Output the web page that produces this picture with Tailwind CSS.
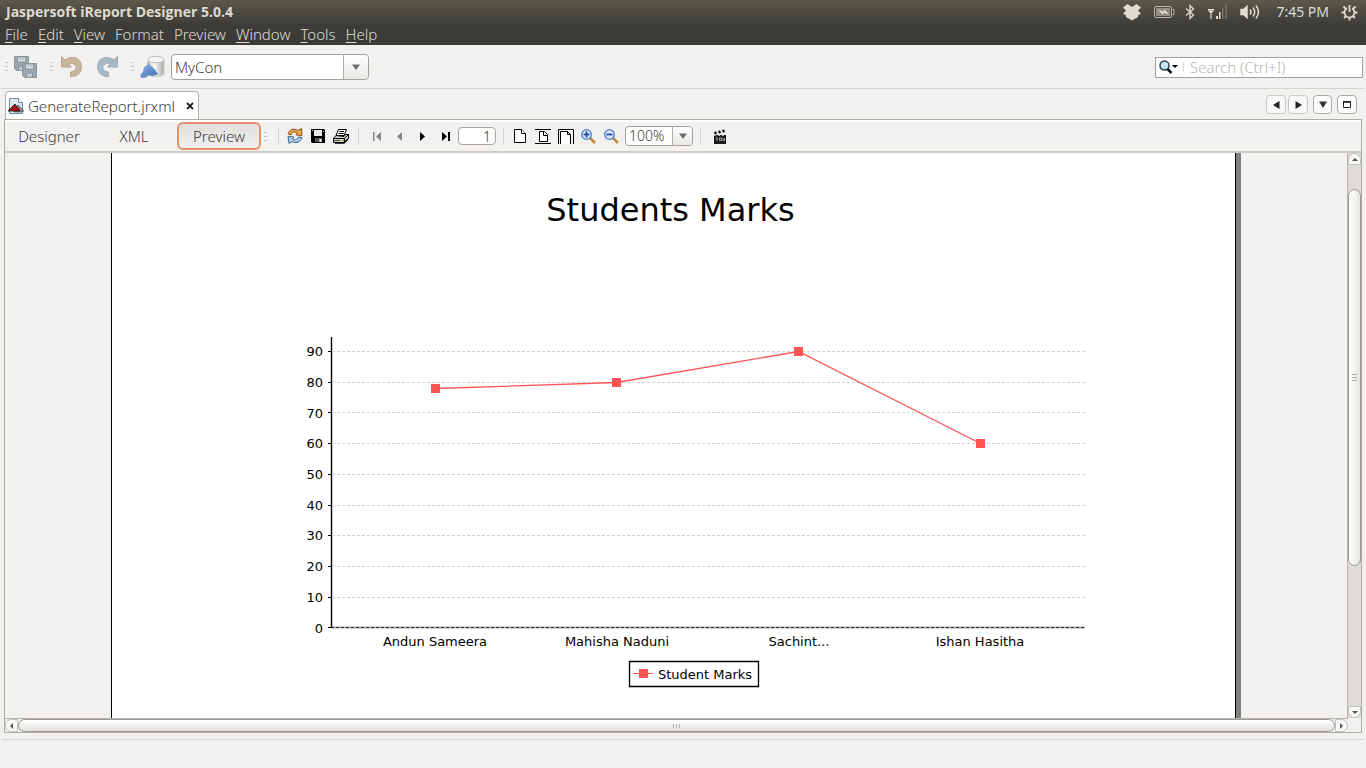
<!DOCTYPE html>
<html lang="en">
<head>
<meta charset="utf-8">
<title>Jaspersoft iReport Designer 5.0.4</title>
<script src="https://cdn.jsdelivr.net/npm/@tailwindcss/browser@4"></script>
</head>
<body class="flex h-screen flex-col overflow-hidden bg-[#f2f1f0] font-['Noto_Sans','Open_Sans',sans-serif] text-[15px] font-light text-[#3c3c3c]">

<!-- System panel -->
<header class="flex h-6 shrink-0 items-center justify-between bg-linear-to-b from-[#5b584b] to-[#3e3d38] pl-1.5 pr-2 text-[#dfdbd2]">
  <h1 class="font-['Open_Sans',sans-serif] text-[14px] font-bold leading-6">Jaspersoft iReport Designer 5.0.4</h1>
  <div class="flex items-center">
    <svg class="mr-3" width="20" height="18" viewBox="0 0 20 18" fill="#dfdbd2"><path d="M5.500 1 10 4l4.500-3L19 4.500 16 7.500l3 3-3 2v1.500l-6 3.500-6-3.500v-1.500l-3-2 3-3-3-3z"/></svg>
    <svg class="mr-2.5" width="21" height="12" viewBox="0 0 21 12"><rect x=".5" y=".5" width="17" height="11" rx="1.500" fill="none" stroke="#b9b5ab"/><rect x="2" y="2" width="14" height="8" fill="#8f8c82"/><path d="M18.500 3.500h1.500v5h-1.500" fill="none" stroke="#b9b5ab"/><path d="m3.500 3.500 6 2.500.5-2.500 5 5-5.500-2-.5 2z" fill="#f0ede6"/></svg>
    <svg class="mr-3" width="10" height="16" viewBox="0 0 10 16" fill="none" stroke="#dfdbd2" stroke-width="1.300"><path d="m1 4.500 7.500 6.500L5 14.500v-13L8.500 5 1 11.500"/></svg>
    <svg class="mr-3" width="21" height="16" viewBox="0 0 21 16"><path d="M1 5.500h6M1.500 6 4 9l2.500-3M4 5.500V15" fill="none" stroke="#dfdbd2" stroke-width="1.200"/><path d="M9 12h2v3H9z" fill="#dfdbd2"/><path d="M12 8h1.500v7H12z" fill="#dfdbd2"/><path d="M15 4h1.500v11H15zM18.500 0H20v15h-1.500z" fill="#77746a"/></svg>
    <svg class="mr-3.5" width="22" height="16" viewBox="0 0 22 16" fill="none" stroke="#dfdbd2" stroke-width="1.500"><path d="M1 5.500h2.500L7 2.500v11L3.500 10.500H1z" fill="#dfdbd2"/><path d="M10 5.500q2 2.500 0 5M13 3.500q3.500 4.500 0 9M16 1.500q5 6.500 0 13"/></svg>
    <span class="mr-3 font-['Noto_Sans',sans-serif] text-[14px] font-normal leading-6">7:45 PM</span>
    <svg width="17" height="17" viewBox="0 0 17 17" fill="none" stroke="#dfdbd2"><path d="M6 4.200a5 5 0 1 0 5 0" stroke-width="1.800"/><path d="M8.500 1v7" stroke-width="1.800"/><path d="M.5 8.500h3M13.500 8.500h3M8.500 13.500v3M2.500 2.500l2.500 2.500M14.500 2.500l-2.500 2.500M3 14l2-2M14 14l-2-2" stroke-width="1.800"/></svg>
  </div>
</header>

<!-- Application menu -->
<nav class="flex h-[21px] shrink-0 items-center gap-2.5 bg-[#3c3b37] pb-0.5 pl-[5px] leading-5 text-[#dfdbd2]">
  <button><u class="underline-offset-2">F</u>ile</button>
  <button><u class="underline-offset-2">E</u>dit</button>
  <button><u class="underline-offset-2">V</u>iew</button>
  <button>Format</button>
  <button>Preview</button>
  <button><u class="underline-offset-2">W</u>indow</button>
  <button><u class="underline-offset-2">T</u>ools</button>
  <button><u class="underline-offset-2">H</u>elp</button>
</nav>

<!-- Main toolbar -->
<div class="mx-px flex h-11 shrink-0 items-center justify-between border-b border-[#d5d3d0] pl-1 pr-0.5">
  <div class="flex items-center">
    <svg class="mr-1.5" width="3" height="9" viewBox="0 0 3 9" stroke="#c6c3c0"><path d="M0 .5h3M0 4.500h3M0 8.500h3"/></svg>
    <button aria-label="Save all" class="mr-[13px]"><svg width="23" height="22" viewBox="0 0 23 22"><g stroke="#8a969e" fill="#9aa7af"><path d="M.5.500h14v14h-12l-2-2z"/><path d="M3.500 1h8v5h-8z" fill="#dbe0e2"/><path d="M4.500 10h6v4.500h-6z" fill="#c3cacd"/><path d="M8.500 7.500h14v14h-12l-2-2z"/><path d="M11.500 8h8v5h-8z" fill="#dbe0e2"/><path d="M12.500 17h6v4.500h-6z" fill="#c3cacd"/></g><path d="M5 3h5M13 10h5" stroke="#aab3b8"/></svg></button>
    <svg class="mr-2" width="3" height="9" viewBox="0 0 3 9" stroke="#c6c3c0"><path d="M0 .5h3M0 4.500h3M0 8.500h3"/></svg>
    <button aria-label="Undo" class="mr-[13px]"><svg width="22" height="22" viewBox="0 0 22 22"><path d="M.5.500 4 4C10-.5 20 .5 20.500 10.500 20.500 17 16 21 9.500 20.500v-4.500c8-.5 7.500-10-2-8.500l3 3.500H.5z" fill="#c9b49c" stroke="#bba58d"/></svg></button>
    <button aria-label="Redo" class="mr-[13px]"><svg width="22" height="22" viewBox="0 0 22 22"><path d="M21.500.5 18 4C12-.5 2 .5 1.500 10.500 1.500 17 6 21 12.500 20.500v-4.500c-8-.5-7.500-10 2-8.500l-3 3.500h10z" fill="#a9bac4" stroke="#9aacb7"/></svg></button>
    <svg class="mr-1.5" width="3" height="9" viewBox="0 0 3 9" stroke="#c6c3c0"><path d="M0 .5h3M0 4.500h3M0 8.500h3"/></svg>
    <button aria-label="Database connections" class="mr-1.5"><svg width="25" height="24" viewBox="0 0 25 24"><defs><linearGradient id="can"><stop stop-color="#c9c9c9"/><stop offset=".4" stop-color="#fafafa"/><stop offset="1" stop-color="#a9a9a9"/></linearGradient><linearGradient id="plug" x1="0" y1="0" x2="1" y2="1"><stop stop-color="#8fb2e6"/><stop offset="1" stop-color="#3f6cb4"/></linearGradient></defs><path d="M8 4.500v14c1 4 15 4 16 0v-14z" fill="url(#can)" stroke="#c5c5c5"/><ellipse cx="16" cy="4.500" rx="8" ry="3.200" fill="#f6f6f6" stroke="#c0c0c0"/><path d="m8.500 8 1.500 3c4 2 5 4 6 6l2 2-3 1c-3 1.500-4 0-6 0l-4 2.500H1v-3l2.500-3c0-3 1-5 4-6z" fill="url(#plug)" stroke="#6f93cc" stroke-width=".7"/></svg></button>
    <div class="relative">
      <select aria-label="Connection" class="block h-[26px] w-[198px] appearance-none rounded border border-[#a3a09c] bg-white pl-[3px] leading-5"><option>MyCon</option></select>
      <span class="pointer-events-none absolute inset-y-px right-px flex w-[25px] items-center justify-center rounded-r border-l border-[#b0ada9] bg-linear-to-b from-white to-[#e9e8e6]"><svg width="8" height="6" viewBox="0 0 8 6"><path d="M0 .5h8l-4 5.500z" fill="#6d6d6d"/></svg></span>
    </div>
  </div>
  <label class="mt-px flex h-[21px] w-52 items-center border border-[#a3a09c] bg-white pl-[3px]">
    <svg class="shrink-0" width="25" height="14" viewBox="0 0 25 14"><circle cx="5.500" cy="5.500" r="4.500" fill="#c8e4f8" stroke="#284254" stroke-width="1.500"/><path d="m8.500 9 4 4" stroke="#111" stroke-width="2.500"/><path d="M13 5h6l-3 3z" fill="#000"/><path d="M24.500 2.500v9" stroke="#d5d5d5"/></svg>
    <input aria-label="Search" placeholder="Search (Ctrl+I)" class="h-full w-full min-w-0 bg-transparent pl-1.5 outline-none placeholder:text-[#b5b5b5]">
  </label>
</div>

<!-- Document tabs -->
<div class="flex h-[30px] shrink-0 items-end justify-between pl-[5px] pr-[9px]">
  <div class="-mb-px flex h-[29px] w-[194px] items-center rounded-t border border-b-0 border-[#b5b2ad] bg-white pb-px pl-0.5">
    <svg width="16" height="16" viewBox="0 0 16 16"><path d="M1.500.5h9l4 4v11h-13z" fill="#dbe6f2" stroke="#7088a4"/><path d="M10.500.5v4h4" fill="#fff" stroke="#7088a4"/><path d="m10 7 6 6-3 1H6z" fill="#8a8a8a" stroke="#333" stroke-width=".5"/><path d="m0 13 7-7 5 7z" fill="#a80f0f" stroke="#111" stroke-width=".8"/></svg>
    <span class="ml-1 leading-5">GenerateReport.jrxml</span>
    <button aria-label="Close tab" class="ml-auto mr-1"><svg width="8" height="8" viewBox="0 0 8 8"><path d="m1 1 6 6M7 1 1 7" stroke="#222" stroke-width="1.800"/></svg></button>
  </div>
  <div class="mb-[5px] flex">
    <button aria-label="Previous document" class="mr-0.5 flex h-[19px] w-5 items-center justify-center rounded border border-[#cbc8c4] bg-[#f8f8f7]"><svg width="7" height="8" viewBox="0 0 7 8"><path d="M6.500 0v8L0 4z" fill="#222"/></svg></button>
    <button aria-label="Next document" class="mr-[5px] flex h-[19px] w-5 items-center justify-center rounded border border-[#cbc8c4] bg-[#f8f8f7]"><svg width="7" height="8" viewBox="0 0 7 8"><path d="M.5 0v8L7 4z" fill="#222"/></svg></button>
    <button aria-label="List documents" class="mr-[5px] flex h-[19px] w-[19px] items-center justify-center rounded border border-[#aeaba7] bg-[#fcfcfc]"><svg width="8" height="7" viewBox="0 0 8 7"><path d="M0 .5h8L4 7z" fill="#333"/></svg></button>
    <button aria-label="Maximize" class="flex h-[19px] w-5 items-center justify-center rounded border border-[#aeaba7] bg-[#fcfcfc]"><svg width="8" height="7" viewBox="0 0 8 7"><path d="M.5 1h7v5.500h-7z" fill="#fff" stroke="#222"/><path d="M0 .8h8" stroke="#222" stroke-width="1.500"/></svg></button>
  </div>
</div>

<!-- Editor -->
<main class="ml-1 mr-1 flex min-h-0 flex-1 flex-col border border-[#aeaba4]">
  <div class="flex h-[33px] shrink-0 items-center border-b-2 border-[#cfccc8] border-t-2 border-t-white pb-px pl-0.5">
    <button class="mr-px h-7 w-[84px]">Designer</button>
    <button class="mr-px h-7 w-[84px]">XML</button>
    <button class="flex h-7 w-[84px] items-center justify-center rounded-md border-2 border-[#e5916d] bg-linear-to-b from-[#e0dfde] to-[#f1f0ef] leading-5">Preview</button>
    <svg class="ml-[3px]" width="3" height="9" viewBox="0 0 3 9" stroke="#c6c3c0"><path d="M0 .5h3M0 4.500h3M0 8.500h3"/></svg>
    <span class="ml-[11px] mr-1 h-[17px] w-px bg-[#d3d0cd]"></span>
    <button aria-label="Reload" class="flex w-[23px] justify-center"><svg width="16" height="16" viewBox="0 0 16 16"><path d="M1 6C2 2 6-.5 11 2.500L14.500.5 15 7.500l-6-.5 1.500-2C7 3 5 4 4 7z" fill="#eda644" stroke="#7a4a10" stroke-width=".9"/><path d="M15 9.500c-1 4.500-5.500 6.500-10 4l-3 2-1-7 6 .5-1.500 2c3 1.500 5 .5 6-2z" fill="#a5cdec" stroke="#2f5878" stroke-width=".9"/></svg></button>
    <button aria-label="Save" class="flex w-[23px] justify-center"><svg width="14" height="14" viewBox="0 0 14 14"><path d="M0 0h13l1 1v13H1l-1-1z" fill="#000"/><path d="M3 1h8v6H3z" fill="#e8e8e8"/><path d="M1 1h1v1H1zM12 2h1v1h-1z" fill="#ddd"/><path d="M4 9h7v4H4z" fill="#555"/><path d="M8.500 10h2v3h-2z" fill="#fff"/></svg></button>
    <button aria-label="Print" class="flex w-[23px] justify-center"><svg width="16" height="15" viewBox="0 0 16 15"><path d="M5.500.5h8l-2.500 6H3z" fill="#fff" stroke="#000"/><path d="M6.500 2.500H11M5.500 4.500h5" stroke="#000"/><path d="m3 6.500-2.500 3v4h11l4-4v-4h-3l-1.500 2z" fill="#d0d0d0" stroke="#000"/><path d="M.5 9.500h11l4-4M11.500 9.500v4" stroke="#000" fill="none"/><path d="M1 11.500h10" stroke="#555"/><path d="M7 11h3v1H7z" fill="#e8df20"/><path d="M2 14h9l4-4" stroke="#000" fill="none" stroke-width="1.500"/></svg></button>
    <span class="mx-1.5 h-[17px] w-px bg-[#d3d0cd]"></span>
    <button aria-label="First page" class="flex w-[23px] justify-center"><svg width="8" height="9" viewBox="0 0 8 9" fill="#858585"><path d="M0 0h1.500v9H0zM8 0v9L3 4.500z"/></svg></button>
    <button aria-label="Previous page" class="flex w-[23px] justify-center"><svg width="5" height="9" viewBox="0 0 5 9" fill="#858585"><path d="M5 0v9L0 4.500z"/></svg></button>
    <button aria-label="Next page" class="flex w-[23px] justify-center"><svg width="5" height="9" viewBox="0 0 5 9"><path d="M0 0v9l5-4.500z"/></svg></button>
    <button aria-label="Last page" class="flex w-[23px] justify-center"><svg width="8" height="9" viewBox="0 0 8 9"><path d="M0 0v9l5-4.500zM6 0h2v9H6z"/></svg></button>
    <input aria-label="Page number" value="1" class="ml-px h-[18px] w-[38px] rounded border border-[#aaa7a3] bg-white pr-1 text-right text-[14px] leading-4">
    <span class="ml-[7px] mr-1 h-[17px] w-px bg-[#d3d0cd]"></span>
    <button aria-label="Actual size" class="flex w-[23px] justify-center"><svg width="12" height="14" viewBox="0 0 12 14" fill="#fff" stroke="#000"><path d="M.5.5h7l4 4v9H.5z"/><path d="M7.500.5v4h4"/></svg></button>
    <button aria-label="Fit page" class="flex w-[23px] justify-center"><svg width="16" height="15" viewBox="0 0 16 15" fill="#fff" stroke="#000"><path d="M0 .5h16M0 14.500h16"/><path d="M4.500 2.500h5l3 3v7h-8z"/><path d="M8.500 2.500v4h4"/></svg></button>
    <button aria-label="Fit width" class="flex w-[23px] justify-center"><svg width="16" height="15" viewBox="0 0 16 15" fill="none" stroke="#000"><path d="M.5 15V.5h15V15"/><path d="M2.500 15V2.500h7l3 3V15" fill="#fff"/><path d="M9.500 2.500v3h3"/></svg></button>
    <button aria-label="Zoom in" class="flex w-[23px] justify-center"><svg width="15" height="15" viewBox="0 0 15 15"><path d="m9 9 5 5" stroke="#c58a38" stroke-width="2.500"/><circle cx="5.500" cy="5.500" r="4.800" fill="#d5e8fc" stroke="#4e7dcb" stroke-width="1.300"/><path d="M2.500 5.500h6M5.500 2.500v6" stroke="#173f94" stroke-width="1.700"/></svg></button>
    <button aria-label="Zoom out" class="flex w-[23px] justify-center"><svg width="15" height="15" viewBox="0 0 15 15"><path d="m9 9 5 5" stroke="#c58a38" stroke-width="2.500"/><circle cx="5.500" cy="5.500" r="4.800" fill="#d5e8fc" stroke="#4e7dcb" stroke-width="1.300"/><path d="M2.500 5.500h6" stroke="#173f94" stroke-width="1.700"/></svg></button>
    <div class="relative ml-0.5">
      <select aria-label="Zoom level" class="block h-5 w-[68px] appearance-none rounded border border-[#a3a09c] bg-white pl-[3px] text-[14px] leading-4"><option>100%</option></select>
      <span class="pointer-events-none absolute inset-y-px right-px flex w-5 items-center justify-center rounded-r border-l border-[#b0ada9] bg-linear-to-b from-white to-[#e9e8e6]"><svg width="8" height="6" viewBox="0 0 8 6"><path d="M0 .5h8l-4 5.500z" fill="#6d6d6d"/></svg></span>
    </div>
    <span class="mx-[7px] h-[17px] w-px bg-[#d3d0cd]"></span>
    <button aria-label="Preview animation" class="flex w-[23px] justify-center"><svg width="13" height="15" viewBox="0 0 13 15"><path d="M1 6h12v9H1z" fill="#1c1c1c"/><path d="m0 3 12-3 1 2.500L1 6z" fill="#ddd"/><path d="m1 3 2-.5L4 5l-2 .6zM5 2l2-.5L8 4l-2 .6zM9 1l2-.5L12 3l-2 .6z" fill="#111"/><path d="M1 6.500h12" stroke="#aaa" stroke-dasharray="2 2"/><path d="M3 9h2M4 9v3M6.500 9h2v2.500h-2zM10 9v2.500h1.500V9" stroke="#bbb" stroke-width=".8" fill="none"/></svg></button>
  </div>

  <div class="flex min-h-0 flex-1">
    <!-- Report page, centred on the canvas -->
    <div class="flex min-w-0 flex-1 justify-center overflow-hidden">
      <div class="w-[1130px] max-w-full border-r-[5px] border-[#808080]">
        <article class="flex h-full flex-col items-center border-x border-black bg-white pr-1.5 font-['DejaVu_Sans',sans-serif] font-normal text-black">
          <h2 class="mt-[37px] text-[32px] leading-10">Students Marks</h2>
          <svg class="-mr-[58px] mt-[100px] shrink-0" width="800" height="365" viewBox="300 330 800 365" font-size="13" role="img" aria-label="Line chart of student marks">
            <g stroke="#d0d0d0" stroke-dasharray="3 2">
              <path d="M332 351.500h753M332 382.500h753M332 412.500h753M332 443.500h753M332 474.500h753M332 505.500h753M332 535.500h753M332 566.500h753M332 597.500h753"/>
            </g>
            <path d="M331 627.500h754" stroke="#aaa" stroke-width="2"/>
            <path d="M331 627.500h754" stroke="#333" stroke-dasharray="3 2"/>
            <path d="M331.500 337v291" stroke="#000" stroke-width="1.400"/>
            <path d="M328 351.500h3M328 382.500h3M328 412.500h3M328 443.500h3M328 474.500h3M328 505.500h3M328 535.500h3M328 566.500h3M328 597.500h3M328 627.500h3" stroke="#000"/>
            <g text-anchor="end">
              <text x="323" y="356">90</text><text x="323" y="387">80</text><text x="323" y="418">70</text><text x="323" y="448">60</text><text x="323" y="479">50</text><text x="323" y="510">40</text><text x="323" y="540">30</text><text x="323" y="571">20</text><text x="323" y="602">10</text><text x="323" y="633">0</text>
            </g>
            <g text-anchor="middle">
              <text x="435" y="646">Andun Sameera</text><text x="617" y="646">Mahisha Naduni</text><text x="799" y="646">Sachint...</text><text x="980" y="646">Ishan Hasitha</text>
            </g>
            <path d="m435.500 388.500 181-6 182-31 182 92" fill="none" stroke="#ff5555" stroke-width="1.300"/>
            <path d="M431 384h9v9h-9zM612 378h9v9h-9zM794 347h9v9h-9zM976 439h9v9h-9z" fill="#ff5555"/>
            <path d="M629.500 661.500h129v25h-129z" fill="#fff" stroke="#000" stroke-width="1.300"/>
            <path d="M633 673.500h20" stroke="#ff5555"/><path d="M639 669h9v9h-9z" fill="#ff5555"/>
            <text x="658" y="679">Student Marks</text>
          </svg>
        </article>
      </div>
    </div>
    <div class="flex w-3.5 flex-col border-l border-[#b8b5af] bg-[#dedbd9]">
      <button aria-label="Scroll up" class="flex h-3 items-center justify-center rounded-t-full border border-[#c3c0bc] bg-[#f7f7f6]"><svg width="6" height="3" viewBox="0 0 6 3"><path d="M0 3h6L3 0z" fill="#555"/></svg></button>
      <div class="flex min-h-0 flex-1 flex-col">
        <div class="h-6"></div>
        <div class="flex grow-[376] basis-0 items-center justify-center rounded-full border border-[#9c9995] bg-linear-to-r from-white to-[#e6e5e3]"><svg width="5" height="7" viewBox="0 0 5 7" stroke="#aaa"><path d="M0 .5h5M0 3.500h5M0 6.500h5"/></svg></div>
        <div class="grow-[140] basis-0"></div>
      </div>
      <button aria-label="Scroll down" class="flex h-3 items-center justify-center rounded-b-full border border-[#c3c0bc] bg-[#f7f7f6]"><svg width="6" height="3" viewBox="0 0 6 3"><path d="M0 0h6L3 3z" fill="#555"/></svg></button>
    </div>
  </div>
  <div class="mr-[13px] flex h-3.5 shrink-0 border-t border-[#b8b5af]">
    <button aria-label="Scroll left" class="flex w-[13px] items-center justify-center rounded-l-full border border-[#c3c0bc] bg-[#f7f7f6]"><svg width="3" height="6" viewBox="0 0 3 6"><path d="M3 0v6L0 3z" fill="#555"/></svg></button>
    <div class="flex flex-1 items-center justify-center rounded-full border border-[#9c9995] bg-linear-to-b from-white to-[#e2e1df]"><svg width="8" height="4" viewBox="0 0 8 4" stroke="#aaa"><path d="M.5 0v4M3.500 0v4M6.500 0v4"/></svg></div>
    <button aria-label="Scroll right" class="flex w-[13px] items-center justify-center rounded-r-full border border-[#c3c0bc] bg-[#f7f7f6]"><svg width="3" height="6" viewBox="0 0 3 6"><path d="M0 0v6l3-3z" fill="#555"/></svg></button>
  </div>
</main>

<footer class="mx-0.5 mt-1.5 h-[29px] shrink-0 border-t border-[#d5d3d0]"></footer>
</body>
</html>
